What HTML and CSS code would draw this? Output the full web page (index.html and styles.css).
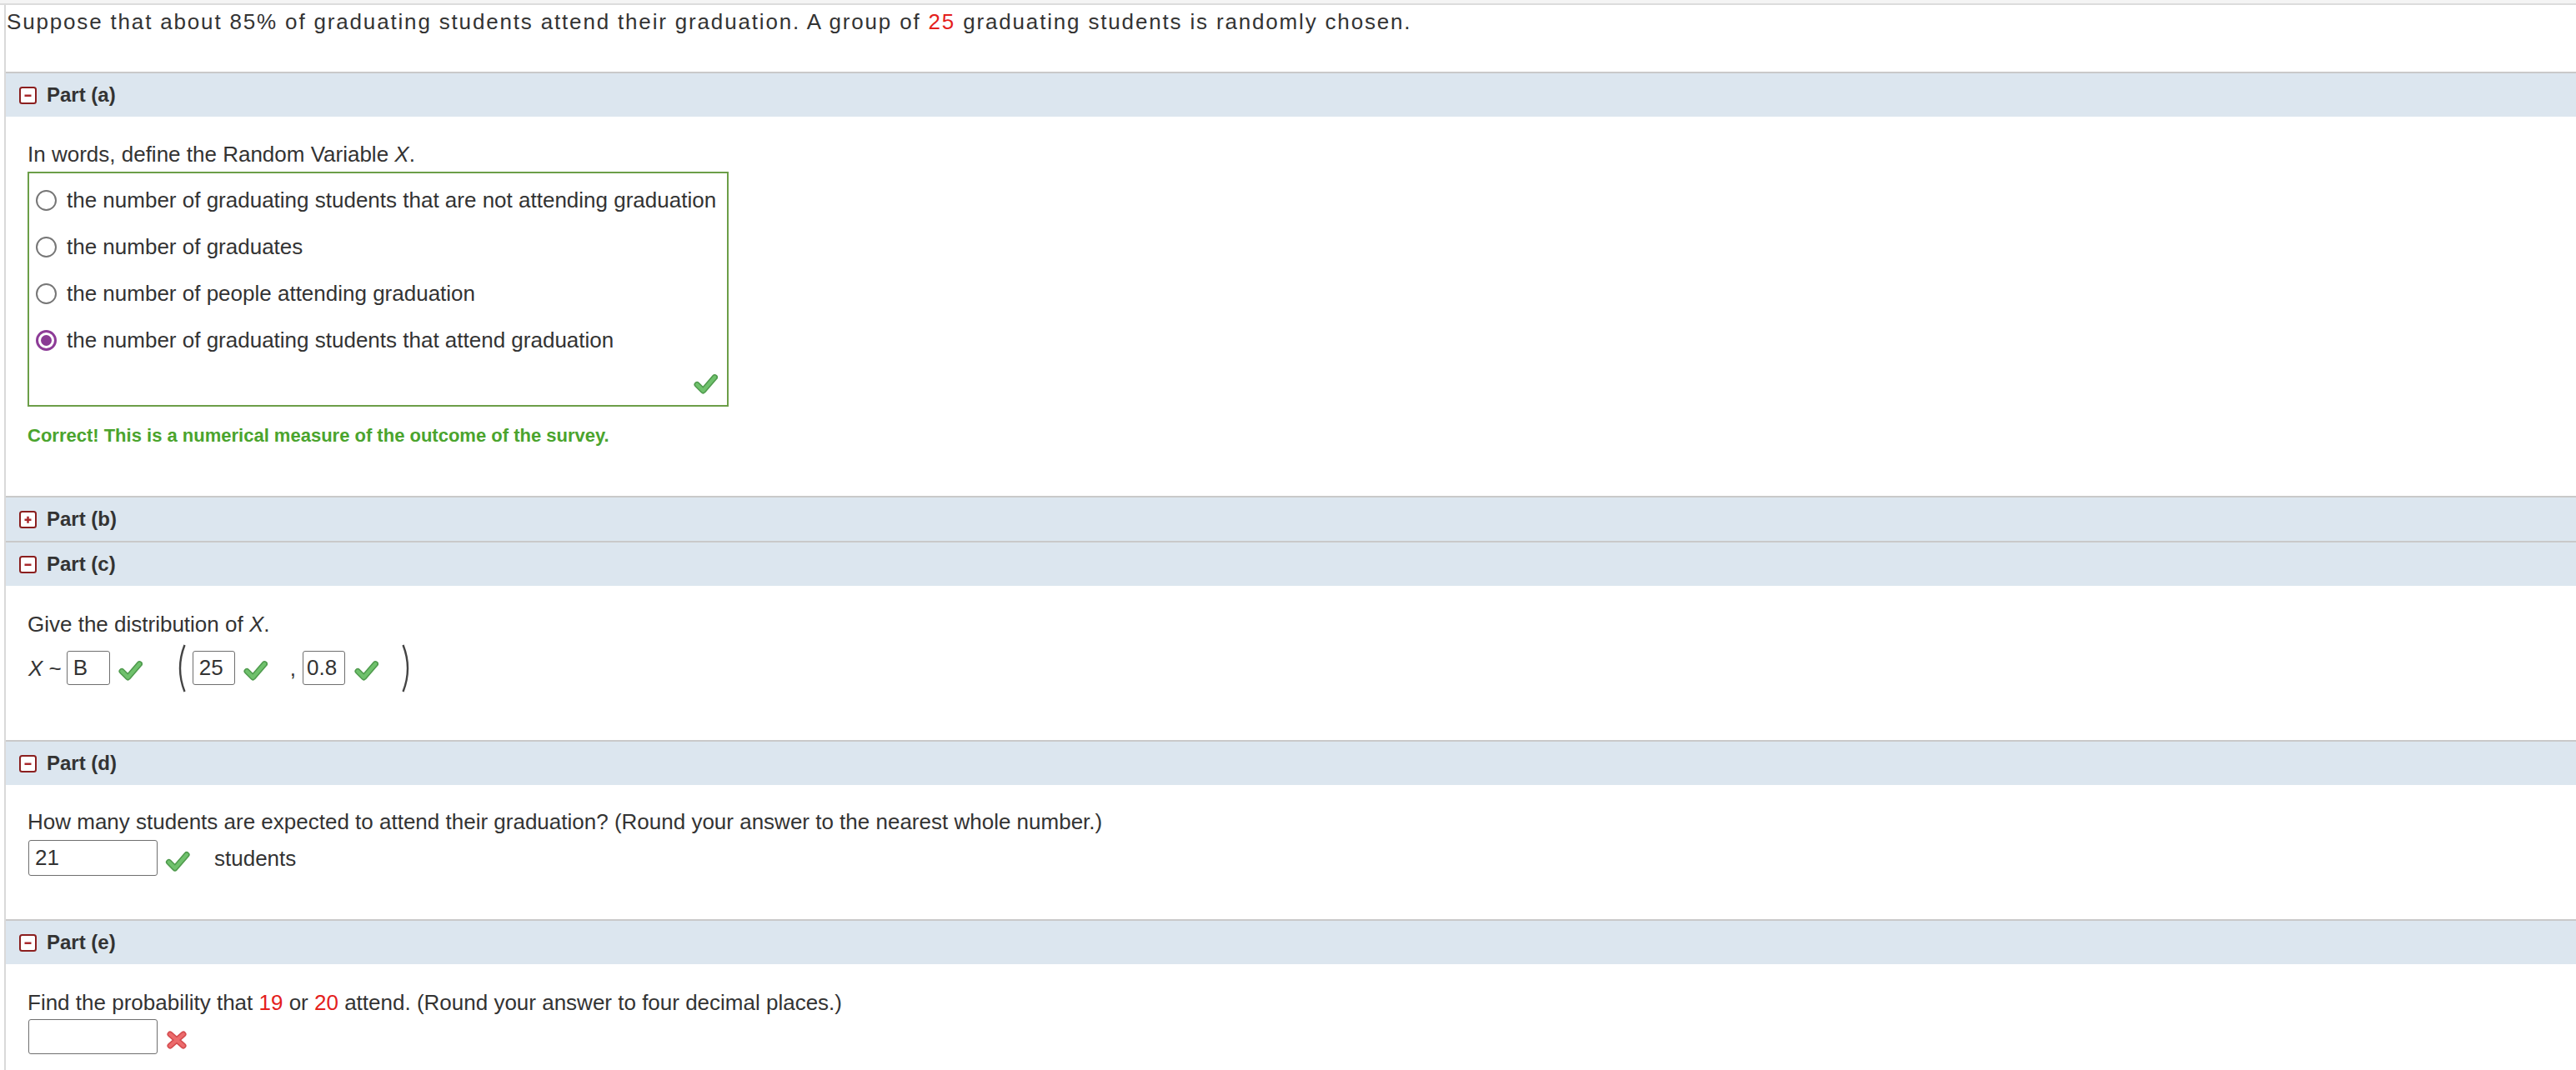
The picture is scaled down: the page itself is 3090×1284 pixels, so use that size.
FILE: index.html
```html
<!DOCTYPE html>
<html>
<head>
<meta charset="utf-8">
<title>Question</title>
<link rel="stylesheet" href="styles.css">
</head>
<body>
<div class="topbar"></div>
<div class="question">
  <div class="intro">Suppose that about 85% of graduating students attend their graduation. A group of <span class="red">25</span> graduating students is randomly chosen.</div>

  <section class="part">
    <div class="part-head">
      <svg class="toggle" viewBox="0 0 21 21" width="21" height="21"><rect x="1" y="1" width="19" height="19" rx="2.5" fill="#fff" stroke="#8b1f1f" stroke-width="2"/><rect x="6.5" y="9.5" width="8" height="2.5" fill="#a8282c"/></svg>
      <span class="part-title">Part (a)</span>
    </div>
    <div class="part-body body-a">
      <p class="prompt">In words, define the Random Variable <i>X</i>.</p>
      <div class="choices">
        <div class="choice"><span class="radio"></span><span>the number of graduating students that are not attending graduation</span></div>
        <div class="choice"><span class="radio"></span><span>the number of graduates</span></div>
        <div class="choice"><span class="radio"></span><span>the number of people attending graduation</span></div>
        <div class="choice sel"><span class="radio"><span class="dot"></span></span><span>the number of graduating students that attend graduation</span></div>
        <div class="choices-foot">
          <svg class="check" viewBox="0 0 28 24" width="29" height="25"><path d="M4 13 L11 20 L24.5 4.5" fill="none" stroke="#4f9a4d" stroke-width="7" stroke-linecap="round" stroke-linejoin="round"/><path d="M4 13 L11 20 L24.5 4.5" fill="none" stroke="#6fc16c" stroke-width="4" stroke-linecap="round" stroke-linejoin="round"/></svg>
        </div>
      </div>
      <p class="feedback">Correct! This is a numerical measure of the outcome of the survey.</p>
    </div>
  </section>

  <section class="part">
    <div class="part-head">
      <svg class="toggle" viewBox="0 0 21 21" width="21" height="21"><rect x="1" y="1" width="19" height="19" rx="2.5" fill="#fff" stroke="#8b1f1f" stroke-width="2"/><rect x="6.5" y="9.5" width="8" height="2.5" fill="#a8282c"/><rect x="9.25" y="6.75" width="2.5" height="8" fill="#a8282c"/></svg>
      <span class="part-title">Part (b)</span>
    </div>
  </section>

  <section class="part">
    <div class="part-head">
      <svg class="toggle" viewBox="0 0 21 21" width="21" height="21"><rect x="1" y="1" width="19" height="19" rx="2.5" fill="#fff" stroke="#8b1f1f" stroke-width="2"/><rect x="6.5" y="9.5" width="8" height="2.5" fill="#a8282c"/></svg>
      <span class="part-title">Part (c)</span>
    </div>
    <div class="part-body body-c">
      <p class="prompt">Give the distribution of <i>X</i>.</p>
      <div class="dist-row">
        <span class="xvar"><i>X</i> ~</span>
        <input class="ans ans-b" type="text" value="B" readonly>
        <svg class="check ck-b" viewBox="0 0 28 24" width="29" height="25"><path d="M4 13 L11 20 L24.5 4.5" fill="none" stroke="#4f9a4d" stroke-width="7" stroke-linecap="round" stroke-linejoin="round"/><path d="M4 13 L11 20 L24.5 4.5" fill="none" stroke="#6fc16c" stroke-width="4" stroke-linecap="round" stroke-linejoin="round"/></svg>
        <svg class="paren paren-l" viewBox="0 0 14 58" width="14" height="58"><path d="M12.5 1 Q1.5 29 12.5 57" fill="none" stroke="#444" stroke-width="2.4"/></svg>
        <input class="ans ans-n" type="text" value="25" readonly>
        <svg class="check ck-n" viewBox="0 0 28 24" width="29" height="25"><path d="M4 13 L11 20 L24.5 4.5" fill="none" stroke="#4f9a4d" stroke-width="7" stroke-linecap="round" stroke-linejoin="round"/><path d="M4 13 L11 20 L24.5 4.5" fill="none" stroke="#6fc16c" stroke-width="4" stroke-linecap="round" stroke-linejoin="round"/></svg>
        <span class="comma">,</span>
        <input class="ans ans-p" type="text" value="0.8" readonly>
        <svg class="check ck-p" viewBox="0 0 28 24" width="29" height="25"><path d="M4 13 L11 20 L24.5 4.5" fill="none" stroke="#4f9a4d" stroke-width="7" stroke-linecap="round" stroke-linejoin="round"/><path d="M4 13 L11 20 L24.5 4.5" fill="none" stroke="#6fc16c" stroke-width="4" stroke-linecap="round" stroke-linejoin="round"/></svg>
        <svg class="paren paren-r" viewBox="0 0 14 58" width="14" height="58"><path d="M1.5 1 Q12.5 29 1.5 57" fill="none" stroke="#444" stroke-width="2.4"/></svg>
      </div>
    </div>
  </section>

  <section class="part">
    <div class="part-head">
      <svg class="toggle" viewBox="0 0 21 21" width="21" height="21"><rect x="1" y="1" width="19" height="19" rx="2.5" fill="#fff" stroke="#8b1f1f" stroke-width="2"/><rect x="6.5" y="9.5" width="8" height="2.5" fill="#a8282c"/></svg>
      <span class="part-title">Part (d)</span>
    </div>
    <div class="part-body body-d">
      <p class="prompt">How many students are expected to attend their graduation? (Round your answer to the nearest whole number.)</p>
      <div class="ans-row">
        <input class="ans ans-wide" type="text" value="21" readonly>
        <svg class="check ck-d" viewBox="0 0 28 24" width="30" height="25"><path d="M4 13 L11 20 L24.5 4.5" fill="none" stroke="#4f9a4d" stroke-width="7" stroke-linecap="round" stroke-linejoin="round"/><path d="M4 13 L11 20 L24.5 4.5" fill="none" stroke="#6fc16c" stroke-width="4" stroke-linecap="round" stroke-linejoin="round"/></svg>
        <span class="unit">students</span>
      </div>
    </div>
  </section>

  <section class="part">
    <div class="part-head">
      <svg class="toggle" viewBox="0 0 21 21" width="21" height="21"><rect x="1" y="1" width="19" height="19" rx="2.5" fill="#fff" stroke="#8b1f1f" stroke-width="2"/><rect x="6.5" y="9.5" width="8" height="2.5" fill="#a8282c"/></svg>
      <span class="part-title">Part (e)</span>
    </div>
    <div class="part-body body-e">
      <p class="prompt">Find the probability that <span class="red">19</span> or <span class="red">20</span> attend. (Round your answer to four decimal places.)</p>
      <div class="ans-row">
        <input class="ans ans-wide ans-empty" type="text" value="" readonly>
        <svg class="cross" viewBox="0 0 28 26" width="28" height="26"><path d="M6 6 L22 20 M22 6 L6 20" fill="none" stroke="#d44c4f" stroke-width="7" stroke-linecap="round"/><path d="M6 6 L22 20 M22 6 L6 20" fill="none" stroke="#ec6b6c" stroke-width="4" stroke-linecap="round"/></svg>
      </div>
    </div>
  </section>
</div>
</body>
</html>
```

FILE: styles.css
```css
* { box-sizing: border-box; }

html, body {
  margin: 0;
  padding: 0;
  background: #ffffff;
}

body {
  font-family: "Liberation Sans", Arial, Helvetica, sans-serif;
  color: #333333;
  font-size: 26px;
}

.topbar {
  height: 6px;
  background: #f4f4f4;
  border-bottom: 2px solid #dcdcdc;
}

.question {
  margin-left: 5px;
  border-left: 2px solid #d9d9d9;
}

.intro {
  height: 80px;
  padding: 5px 0 0 1px;
  font-size: 26px;
  line-height: 30px;
  letter-spacing: 1.83px;
}

.red { color: #e4201c; }

.part-head {
  height: 54px;
  border-top: 2px solid #c9c9c9;
  background: #dce6ef;
  display: flex;
  align-items: center;
  padding-left: 16px;
  gap: 12px;
}

.toggle { flex: none; display: block; }

.part-title {
  font-weight: bold;
  font-size: 24px;
  color: #333;
}

.part-body {
  padding-left: 26px;
  font-size: 26px;
  line-height: 30px;
}

.prompt { margin: 0; }

.body-a { padding-top: 30px; padding-bottom: 59px; }

.choices {
  width: 841px;
  margin-top: 6px;
  padding-top: 4px;
  border: 2px solid #6c9e48;
}

.choice {
  height: 56px;
  display: flex;
  align-items: center;
}

.radio {
  flex: none;
  width: 25px;
  height: 25px;
  margin: 0 12px 0 8px;
  border-radius: 50%;
  border: 2px solid #767676;
  background: #fff;
  display: flex;
  align-items: center;
  justify-content: center;
}

.choice.sel .radio {
  border: 3px solid #8d3b97;
}

.dot {
  width: 13px;
  height: 13px;
  border-radius: 50%;
  background: #8a3a94;
}

.choices-foot {
  height: 50px;
  display: flex;
  justify-content: flex-end;
  align-items: flex-end;
  padding: 0 11px 13px 0;
}

.check, .cross { display: block; flex: none; }

.feedback {
  margin: 22px 0 0;
  font-size: 22px;
  line-height: 26px;
  font-weight: bold;
  color: #4aa42d;
}

.body-c { padding-top: 31px; padding-bottom: 58px; }

.dist-row {
  display: flex;
  align-items: center;
  height: 57px;
  margin-top: 9px;
}

.xvar { margin-left: 1px; white-space: pre; }

.ans {
  flex: none;
  height: 41px;
  border: 1.5px solid #6f6f6f;
  border-radius: 3px;
  background: #fff;
  font-family: "Liberation Sans", Arial, Helvetica, sans-serif;
  font-size: 26px;
  color: #333;
  padding: 0 0 0 7px;
  margin: 0;
  outline: none;
}

.ans-b { width: 52px; margin-left: 6px; }
.ans-n { width: 51px; margin-left: 8px; }
.ans-p { width: 51px; margin-left: 8px; padding-left: 4px; }

.ck-b { margin-left: 10px; margin-top: 6px; }
.ck-n { margin-left: 10px; margin-top: 6px; }
.ck-p { margin-left: 11px; margin-top: 6px; }

.paren { display: block; flex: none; }
.paren-l { margin-left: 38px; }
.paren-r { margin-left: 28px; }

.comma { margin-left: 27px; }

.body-d { padding-top: 29px; padding-bottom: 52px; }

.ans-row {
  display: flex;
  align-items: center;
  margin-top: 7px;
}

.ans-wide { width: 155px; height: 43px; margin-left: 1px; }

.ck-d { margin-left: 9px; margin-top: 8px; }

.unit { margin-left: 29px; }

.body-e { padding-top: 31px; padding-bottom: 19px; }
.body-e .ans-row { margin-top: 5px; }
.ans-empty { height: 42px; }

.cross { margin-left: 9px; margin-top: 8px; }
```
